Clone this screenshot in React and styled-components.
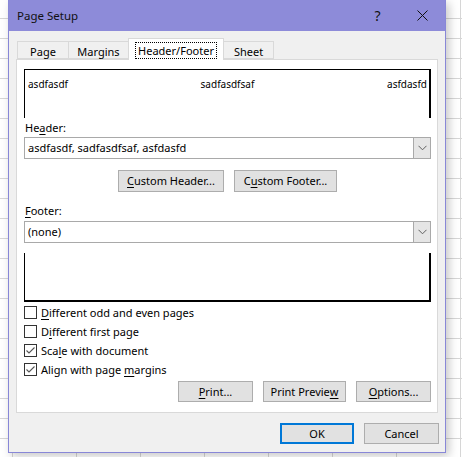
import React from "react";
import styled, { createGlobalStyle } from "styled-components";

const GlobalStyle = createGlobalStyle`
  html, body { margin: 0; padding: 0; background: #fff; }
  body { font-family: "Noto Sans", "Open Sans", sans-serif; font-size: 11px; color: #000; overflow: hidden; }
  * { box-sizing: border-box; }
`;

const Desktop = styled.div`
  width: 462px;
  height: 457px;
  padding-left: 8px;
  background-color: #fff;
  background-image:
    linear-gradient(to bottom, transparent 19px, #d6d6d6 19px),
    linear-gradient(to right, transparent 63px, #d6d6d6 63px);
  background-size: 100% 20px, 64px 100%;
  background-position: 0 -1px, -51px 0;
`;

const Window = styled.div`
  width: 438px;
  height: 453px;
  background: #f0f0f0;
  border: 1px solid #8887d7;
  border-top: 0;
  box-shadow: 3px 3px 9px rgba(0, 0, 0, 0.22);
  display: flex;
  flex-direction: column;
`;

const TitleBar = styled.div`
  height: 31px;
  flex: none;
  background: #8d8bd9;
  display: flex;
  align-items: center;
  padding-left: 8px;
`;

const Title = styled.div`
  flex: 1;
  font-size: 11.5px;
  color: #111;
  padding-bottom: 1px;
`;

const TitleButton = styled.div`
  width: 45px;
  height: 31px;
  display: flex;
  align-items: center;
  justify-content: center;
  font-size: 14px;
  color: #111;
`;

const Body = styled.div`
  flex: 1;
  display: flex;
  flex-direction: column;
  padding: 7px 7px 8px 7px;
`;

const TabStrip = styled.div`
  height: 21px;
  display: flex;
  align-items: flex-end;
  padding-left: 1px;
`;

const Tab = styled.div`
  width: ${(p) => p.$w}px;
  margin-left: -1px;
  &:first-child { margin-left: 0; }
  height: ${(p) => (p.$active ? 22 : 18)}px;
  margin-bottom: ${(p) => (p.$active ? -1 : 0)}px;
  background: ${(p) => (p.$active ? "#fff" : "#f0f0f0")};
  border: 1px solid #d9d9d9;
  border-bottom: ${(p) => (p.$active ? "0" : "1px solid #d9d9d9")};
  display: flex;
  align-items: center;
  justify-content: center;
  padding-top: ${(p) => (p.$active ? 0 : 2)}px;
  position: ${(p) => (p.$active ? "relative" : "static")};
  z-index: ${(p) => (p.$active ? 1 : 0)};
  color: #000;
`;

const FocusText = styled.span`
  border: 1px dotted #000;
  padding: 0 2px;
  line-height: 15px;
  margin-top: 1px;
`;

const Panel = styled.div`
  height: 354px;
  background: #fff;
  border: 1px solid #d9d9d9;
  padding: 9px 6px 8px 7px;
  display: flex;
  flex-direction: column;
`;

const PreviewBox = styled.div`
  height: ${(p) => p.$h}px;
  flex: none;
  border-left: 1px solid #000;
  border-right: 2px solid #000;
  border-top: ${(p) => (p.$kind === "header" ? "1px solid #000" : "0")};
  border-bottom: ${(p) => (p.$kind === "footer" ? "2px solid #000" : "0")};
  margin-top: ${(p) => p.$mt || 0}px;
  display: grid;
  grid-template-columns: 1fr 1fr 1fr;
  align-items: start;
  padding: 8px 2px 0 3px;
  font-size: 10px;
  line-height: 13px;
`;

const PreviewText = styled.span`
  text-align: ${(p) => p.$align};
  white-space: nowrap;
`;

const FieldLabel = styled.div`
  height: 16px;
  line-height: 16px;
  margin-top: ${(p) => p.$mt}px;
  padding-left: 1px;
`;

const Combo = styled.div`
  height: 22px;
  margin-top: ${(p) => p.$mt}px;
  border: 1px solid #a9a9a9;
  background: #fff;
  display: flex;
  align-items: stretch;
`;

const ComboText = styled.div`
  flex: 1;
  padding-left: 3px;
  line-height: 20px;
`;

const ComboButton = styled.div`
  width: 17px;
  background: #e5e5e5;
  border-left: 1px solid #a9a9a9;
  display: flex;
  align-items: center;
  justify-content: center;
`;

const ButtonRow = styled.div`
  display: flex;
  justify-content: ${(p) => p.$justify};
  gap: ${(p) => p.$gap || 10}px;
  margin-top: ${(p) => p.$mt || 0}px;
  margin-right: ${(p) => p.$mr || 0}px;
`;

const Button = styled.div`
  width: ${(p) => p.$w}px;
  height: ${(p) => p.$h || 21}px;
  background: #e1e1e1;
  border: ${(p) => (p.$default ? "2px solid #0078d7" : "1px solid #adadad")};
  display: flex;
  align-items: center;
  justify-content: center;
  white-space: nowrap;
  padding-bottom: 1px;
`;

const CheckList = styled.div`
  margin-top: 1px;
  display: flex;
  flex-direction: column;
`;

const CheckRow = styled.div`
  height: 19px;
  display: flex;
  align-items: center;
  gap: 4px;
`;

const CheckBox = styled.div`
  width: 13px;
  height: 13px;
  border: 1px solid #333;
  background: #fff;
  display: flex;
  align-items: center;
  justify-content: center;
`;

const Key = styled.span`
  text-decoration: underline;
  text-underline-offset: 2px;
`;

const Spacer = styled.div`
  flex: 1;
`;

const Chevron = () => (
  <svg width="9" height="6" viewBox="0 0 9 6">
    <polyline points="0.5,0.8 4.5,4.8 8.5,0.8" fill="none" stroke="#606060" strokeWidth="1" />
  </svg>
);

const Check = () => (
  <svg width="11" height="11" viewBox="0 0 11 11">
    <polyline points="1.5,5.5 4,8 9.5,2.5" fill="none" stroke="#555" strokeWidth="1.1" />
  </svg>
);

const CloseIcon = () => (
  <svg width="11" height="11" viewBox="0 0 11 11">
    <path d="M0.5 0.5 L10.5 10.5 M10.5 0.5 L0.5 10.5" stroke="#111" strokeWidth="1" />
  </svg>
);

const checks = [
  { pre: "", key: "D", post: "ifferent odd and even pages", on: false },
  { pre: "D", key: "i", post: "fferent first page", on: false },
  { pre: "Sca", key: "l", post: "e with document", on: true },
  { pre: "Align with page ", key: "m", post: "argins", on: true },
];

export default function App() {
  return (
    <>
      <GlobalStyle />
      <Desktop>
        <Window>
          <TitleBar>
            <Title>Page Setup</Title>
            <TitleButton>?</TitleButton>
            <TitleButton>
              <CloseIcon />
            </TitleButton>
          </TitleBar>
          <Body>
            <TabStrip>
              <Tab $w={52}>Page</Tab>
              <Tab $w={61}>Margins</Tab>
              <Tab $w={96} $active>
                <FocusText>Header/Footer</FocusText>
              </Tab>
              <Tab $w={51}>Sheet</Tab>
            </TabStrip>
            <Panel>
              <PreviewBox $kind="header" $h={49}>
                <PreviewText $align="left">asdfasdf</PreviewText>
                <PreviewText $align="center">sadfasdfsaf</PreviewText>
                <PreviewText $align="right">asfdasfd</PreviewText>
              </PreviewBox>
              <FieldLabel $mt={2}>
                He<Key>a</Key>der:
              </FieldLabel>
              <Combo $mt={1}>
                <ComboText>asdfasdf, sadfasdfsaf, asfdasfd</ComboText>
                <ComboButton>
                  <Chevron />
                </ComboButton>
              </Combo>
              <ButtonRow $justify="center" $mt={11}>
                <Button $w={106} $h={22}>
                  <Key>C</Key>ustom Header...
                </Button>
                <Button $w={103} $h={22}>
                  C<Key>u</Key>stom Footer...
                </Button>
              </ButtonRow>
              <FieldLabel $mt={11}>
                <Key>F</Key>ooter:
              </FieldLabel>
              <Combo $mt={2}>
                <ComboText>(none)</ComboText>
                <ComboButton>
                  <Chevron />
                </ComboButton>
              </Combo>
              <PreviewBox $kind="footer" $h={49} $mt={10} />
              <CheckList>
                {checks.map((c) => (
                  <CheckRow key={c.post}>
                    <CheckBox>{c.on && <Check />}</CheckBox>
                    <span>
                      {c.pre}
                      <Key>{c.key}</Key>
                      {c.post}
                    </span>
                  </CheckRow>
                ))}
              </CheckList>
              <ButtonRow $justify="flex-end" $mt={2}>
                <Button $w={75}>
                  <Key>P</Key>rint...
                </Button>
                <Button $w={83}>
                  Print Previe<Key>w</Key>
                </Button>
                <Button $w={75}>
                  <Key>O</Key>ptions...
                </Button>
              </ButtonRow>
            </Panel>
            <Spacer />
            <ButtonRow $justify="flex-end" $gap={10} $mr={-1}>
              <Button $w={74} $default>
                OK
              </Button>
              <Button $w={75}>Cancel</Button>
            </ButtonRow>
          </Body>
        </Window>
      </Desktop>
    </>
  );
}
